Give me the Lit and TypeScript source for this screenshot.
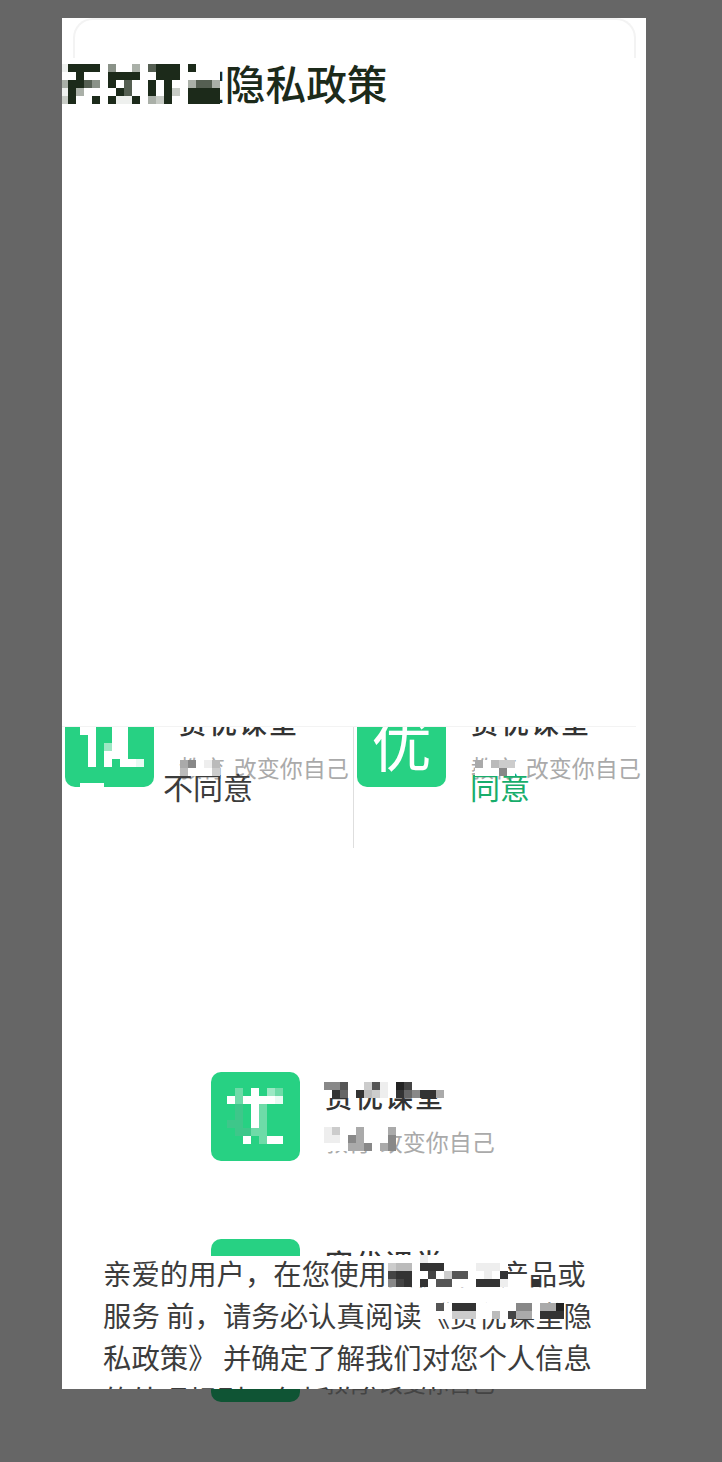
import { LitElement, html, css } from "lit";
import { customElement } from "lit/decorators.js";

const GRAY: Record<string, string> = {
  w: "#fff", "0": "#222", "1": "#333", "2": "#444", "3": "#555", "4": "#666",
  "5": "#888", "6": "#aaa", "7": "#bbb", "8": "#ccc", "9": "#eee",
};
const DARK: Record<string, string> = {
  w: "#fff", "0": "#1c2a1a", "3": "#555f52", "5": "#8a9288", "7": "#aab0a8", "8": "#c8ccc6", "9": "#eef0ee",
};
const GREEN: Record<string, string> = {
  w: "#fff", g: "#27d183", d: "#3ec78a", m: "#6edba8", l: "#9ce8c4", e: "#e8fbf3",
};

// Mosaic patches that hide the brand name; x and y are page coordinates.
const PATCHES: { x: number; y: number; p: Record<string, string>; rows: string[] }[] = [
  {
    x: 60, y: 64, p: DARK,
    rows: [
      "90000w5ww7w3000w0www",
      "ww0www0000ww000wwwww",
      "70035w0w3ww0w0ww7337",
      "907wwww03ww0w08w0000",
      "80ww0w0990w780ww0000",
    ],
  },
  {
    x: 72, y: 727, p: GREEN,
    rows: [
      "gwwggwwgg",
      "ggwggwwgg",
      "ggwglwwgg",
      "ggwgwwwgg",
      "ggwgwgwwe",
      "ggggggggg",
      ".........",
      ".www.....",
    ],
  },
  { x: 180, y: 760, p: GRAY, rows: ["65w97", "7www8"] },
  { x: 475, y: 760, p: GRAY, rows: ["6w788", "www5w"] },
  {
    x: 219, y: 1080, p: GREEN,
    rows: [
      "ggggggggg",
      "ggmgwglmg",
      "gwmwwwweg",
      "ggdgwmggg",
      "ggdgwmggg",
      "gddgwmggg",
      "ggddmmggg",
      "gggwgmwwg",
      "ggggggggg",
    ],
  },
  { x: 324, y: 1082, p: GRAY, rows: ["553ww839w02wwww", "w14w1789w145116"] },
  { x: 324, y: 1127, p: GRAY, rows: ["98ww6www6", "99w56www5", "www665w65"] },
  {
    x: 388, y: 1255, p: GRAY,
    rows: [
      "wwww9wwwwwwwww.....",
      "877w111wwww999w....",
      "211ww2w833ww9w1....",
      "521w1w33www1119...1",
    ],
  },
  { x: 436, y: 1303, p: GRAY, rows: ["3w111wwwww55w660", "ww888ww7w266w111"] },
];

function item(name: string, sub: string) {
  return html`<div class="item">
    <div class="icon"><span>优</span></div>
    <div class="text">
      <div class="name">${name}</div>
      <div class="sub">${sub}</div>
    </div>
  </div>`;
}

@customElement("app-root")
export class AppRoot extends LitElement {
  static styles = css`
    :host {
      display: block;
      width: 722px;
      height: 1462px;
      font-family: "Noto Sans CJK SC", "Noto Sans", sans-serif;
    }
    .root {
      position: relative;
      width: 722px;
      height: 1462px;
      overflow: hidden;
      background: #fff;
    }
    .under {
      padding: 1313px 0 0 211px;
    }
    .scrim {
      position: absolute;
      inset: 0;
      background: rgba(0, 0, 0, 0.6);
    }
    .panel {
      position: absolute;
      left: 62px;
      top: 18px;
      width: 584px;
      height: 1371px;
      background: #fff;
      overflow: hidden;
    }
    .card-top {
      box-sizing: border-box;
      width: 563px;
      height: 40px;
      margin-left: 11px;
      border: 2px solid #f3f3f3;
      border-bottom: none;
      border-radius: 20px 20px 0 0;
    }
    .title {
      margin: 1px 0 0 0;
      font-size: 40.7px;
      line-height: 48px;
      font-weight: 500;
      color: #1c2a1a;
      white-space: nowrap;
    }
    .row {
      position: relative;
      display: grid;
      grid-template-columns: 292px 292px;
      height: 122px;
      margin-top: 619px;
    }
    .row::before {
      content: "";
      position: absolute;
      left: 0;
      top: 0;
      width: 574px;
      height: 1px;
      background: #f3f3f3;
      z-index: 1;
    }
    .col {
      position: relative;
      box-sizing: border-box;
      padding-left: 3px;
      clip-path: inset(0 -20px 0 0);
    }
    .col .item {
      margin-top: -28px;
    }
    .col.first::after {
      content: "";
      position: absolute;
      right: 0;
      top: 0;
      width: 1px;
      height: 100%;
      background: #dedede;
    }
    .btn {
      position: absolute;
      inset: 0 0 2px 0;
      display: flex;
      align-items: center;
      justify-content: center;
      font-size: 30px;
      color: #3c3c3c;
    }
    .btn.ok {
      color: #17ad6b;
    }
    .item {
      display: flex;
      gap: 25px;
      white-space: nowrap;
    }
    .list-one {
      margin: 224px 0 0 149px;
    }
    .list-two {
      margin: 77px 0 0 149px;
    }
    .icon {
      flex: none;
      display: flex;
      align-items: center;
      justify-content: center;
      width: 89px;
      height: 89px;
      border-radius: 10px;
      background: #27d183;
      color: #fff;
      font-size: 60px;
      line-height: 1;
      padding-bottom: 4px;
      box-sizing: border-box;
    }
    .name {
      font-size: 28px;
      line-height: 48px;
      font-weight: 500;
      color: #333;
      letter-spacing: 2px;
    }
    .sub {
      font-size: 23px;
      line-height: 42px;
      color: #aaa;
      word-spacing: 3.5px;
    }
    .message {
      display: flow-root;
      position: relative;
      height: 135px;
      margin-top: -73px;
      padding-left: 41px;
      background: #fff;
      font-size: 28.4px;
      line-height: 42px;
      color: #3c3c3c;
      white-space: nowrap;
    }
    .lines {
      margin-top: -4px;
    }
    .patch {
      position: absolute;
      display: grid;
      grid-auto-rows: 8px;
    }
    .patch div {
      width: 8px;
      height: 8px;
    }
  `;

  private patch(m: (typeof PATCHES)[number]) {
    const cols = Math.max(...m.rows.map((r) => r.length));
    const cells = m.rows.flatMap((r) => r.padEnd(cols, "w").split(""));
    return html`<div
      class="patch"
      style="left:${m.x - 62}px;top:${m.y - 18}px;grid-template-columns:repeat(${cols},8px)"
    >
      ${cells.map((c) => html`<div style="background:${m.p[c] ?? "transparent"}"></div>`)}
    </div>`;
  }

  render() {
    return html`<div class="root">
      <div class="under">${item("贾优课堂", "教育 改变你自己")}</div>
      <div class="scrim"></div>
      <div class="panel">
        <div class="card-top"></div>
        <div class="title">贾优课堂隐私政策</div>
        <div class="row">
          <div class="col first">
            ${item("贾优课堂", "教育 改变你自己")}
            <div class="btn">不同意</div>
          </div>
          <div class="col">
            ${item("贾优课堂", "教育 改变你自己")}
            <div class="btn ok">同意</div>
          </div>
        </div>
        <div class="list-one">${item("贾优课堂", "教育 改变你自己")}</div>
        <div class="list-two">${item("寒优课堂", "教育 改变你自己")}</div>
        <div class="message">
          <div class="lines">
            亲爱的用户，在您使用贾优课堂产品或<br />
            服务 前，请务必认真阅读《贾优课堂隐<br />
            私政策》 并确定了解我们对您个人信息<br />
            的处理规则，包括收集和使用
          </div>
        </div>
        ${PATCHES.map((m) => this.patch(m))}
      </div>
    </div>`;
  }
}
